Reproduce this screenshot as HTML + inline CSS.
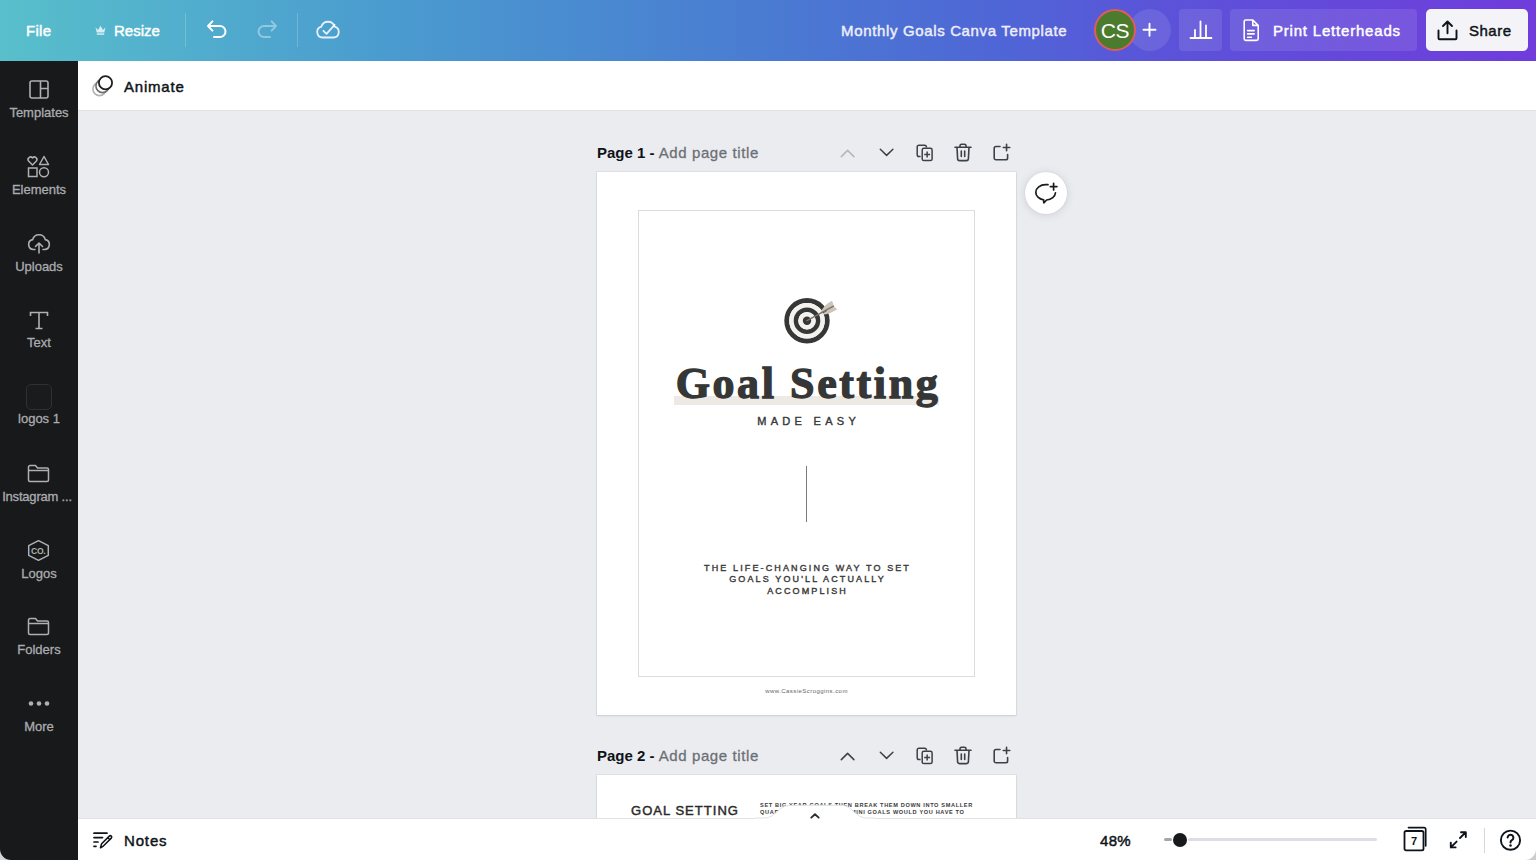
<!DOCTYPE html>
<html><head><meta charset="utf-8">
<style>
*{box-sizing:border-box;margin:0;padding:0}
html,body{width:1536px;height:860px;overflow:hidden;font-family:"Liberation Sans",sans-serif;background:#ebecf0;position:relative}
.a{position:absolute}
svg{position:absolute;overflow:visible}
#hdr{position:absolute;left:0;top:0;width:1536px;height:61px;background:linear-gradient(90deg,#58bfcb 0px,#4a9bcf 390px,#4a7bd2 770px,#4f66d6 1000px,#5b53d9 1160px,#703cdc 1536px)}
.ht{position:absolute;color:#fff;font-size:15px;-webkit-text-stroke:0.45px currentColor;white-space:nowrap;line-height:20px;margin-top:0.5px}
#side{position:absolute;left:0;top:61px;width:78px;height:799px;background:#18191b}
.sl{position:absolute;left:0;width:78px;text-align:center;color:#aaacaf;font-size:13px;white-space:nowrap;line-height:16px;-webkit-text-stroke:0.3px #aaacaf}
#tool{position:absolute;left:78px;top:61px;width:1458px;height:50px;background:#fff;border-bottom:1px solid #e0e1e5}
#bot{position:absolute;left:78px;top:818px;width:1458px;height:42px;background:#fff;border-top:1px solid #e0e1e5}
.pt{position:absolute;left:597px;font-size:15px;line-height:20px;color:#0e1318;white-space:nowrap}
.pt b{letter-spacing:0px}
.pt span{color:#6c7075;-webkit-text-stroke:0.3px #6c7075;letter-spacing:0.6px}
.page{position:absolute;left:597px;width:419px;background:#fff;box-shadow:0 0 0 1px rgba(64,87,109,.07),0 1px 2px rgba(53,71,90,.12)}
</style></head><body>
<div id="hdr">
  <div class="ht" style="left:26px;top:20px;letter-spacing:0.3px">File</div>
  <svg style="left:95px;top:25px" width="11" height="10" viewBox="0 0 11 10"><path d="M0.5 2.2 L3 5 L5.5 0.8 L8 5 L10.5 2.2 L9.3 7.5 L1.7 7.5 Z" fill="#d6edf1"/><rect x="1.8" y="8.3" width="7.4" height="1.5" fill="#d6edf1"/></svg>
  <div class="ht" style="left:114px;top:20px;letter-spacing:0px">Resize</div>
  <div class="a" style="left:185px;top:13px;width:1px;height:34px;background:rgba(255,255,255,.2)"></div>
  <svg style="left:205px;top:18px" width="24" height="22" viewBox="0 0 24 22"><path d="M7.4 3.4 L3 8 L7.4 12.6 M3 8 H15 a5.5 5.5 0 0 1 0 11 H9" fill="none" stroke="#fff" stroke-width="2" stroke-linecap="round" stroke-linejoin="round"/></svg>
  <svg style="left:255px;top:18px" width="24" height="22" viewBox="0 0 24 22"><path d="M16.6 3.4 L21 8 L16.6 12.6 M21 8 H9 a5.5 5.5 0 0 0 0 11 H15" fill="none" stroke="rgba(255,255,255,.38)" stroke-width="2" stroke-linecap="round" stroke-linejoin="round"/></svg>
  <div class="a" style="left:297px;top:13px;width:1px;height:34px;background:rgba(255,255,255,.2)"></div>
  <svg style="left:316px;top:19px" width="24" height="20" viewBox="0 0 24 20"><path d="M6.5 18.5 H17.5 a5.5 5.5 0 0 0 1.2 -10.8 a7 7 0 0 0 -13.4 0 a5.5 5.5 0 0 0 1.2 10.8 Z" fill="none" stroke="rgba(255,255,255,.85)" stroke-width="1.8" stroke-linejoin="round"/><path d="M7.4 11.8 L10.5 14.8 L18.6 5.8" fill="none" stroke="rgba(255,255,255,.85)" stroke-width="1.8" stroke-linecap="round" stroke-linejoin="round"/></svg>
  <div class="ht" style="left:841px;top:20px;color:#eeeefa;letter-spacing:0.65px">Monthly Goals Canva Template</div>
  <div class="a" style="left:1129px;top:9px;width:42px;height:42px;border-radius:50%;background:rgba(255,255,255,.1)"></div>
  <div class="a" style="left:1094px;top:9px;width:42px;height:42px;border-radius:50%;background:#4b7b2c;border:2px solid #e25b5b;color:#fff;font-size:21px;line-height:40px;text-align:center;letter-spacing:-0.3px">CS</div>
  <svg style="left:1143px;top:23px" width="14" height="14" viewBox="0 0 14 14"><path d="M6.5 0.7 V12.8 M0.5 6.7 H12.5" stroke="#fff" stroke-width="1.9" stroke-linecap="round"/></svg>
  <div class="a" style="left:1179px;top:9px;width:43px;height:42px;border-radius:4px;background:rgba(255,255,255,.1)"></div>
  <svg style="left:1189px;top:20px" width="24" height="20" viewBox="0 0 24 20"><path d="M1.5 18 H22.5 M6 18 V10 M11.5 18 V1.5 M17 18 V5.5" fill="none" stroke="#fff" stroke-width="1.8" stroke-linecap="round"/></svg>
  <div class="a" style="left:1230px;top:9px;width:187px;height:42px;border-radius:4px;background:rgba(255,255,255,.1)"></div>
  <svg style="left:1243px;top:19px" width="18" height="23" viewBox="0 0 18 23"><path d="M2.8 1 H9.8 L15.2 6.4 V19.8 a1.6 1.6 0 0 1 -1.6 1.6 H2.8 a1.6 1.6 0 0 1 -1.6 -1.6 V2.6 a1.6 1.6 0 0 1 1.6 -1.6 Z M9.8 1 V6.4 H15.2 M4.6 11.6 H11.2 M4.6 14.9 H11.2 M4.6 18.2 H8.4" fill="none" stroke="#fff" stroke-width="1.6" stroke-linejoin="round" stroke-linecap="round"/></svg>
  <div class="ht" style="left:1273px;top:20px;letter-spacing:0.8px">Print Letterheads</div>
  <div class="a" style="left:1426px;top:9px;width:102px;height:42px;border-radius:5px;background:#f4f3f8"></div>
  <svg style="left:1437px;top:20px" width="23" height="22" viewBox="0 0 23 22"><path d="M10.5 13.2 V1.8 M6 6 L10.5 1.5 L15 6 M1.5 10.5 V18.2 a1 1 0 0 0 1 1 H18.5 a1 1 0 0 0 1 -1 V10.5" fill="none" stroke="#0e1318" stroke-width="1.9" stroke-linecap="round" stroke-linejoin="round"/></svg>
  <div class="ht" style="left:1469px;top:20px;color:#0e1318;letter-spacing:0.5px">Share</div>
</div>
<div id="side">
  <svg style="left:29px;top:19px" width="20" height="19" viewBox="0 0 20 19"><rect x="1" y="1" width="18" height="17" rx="2" fill="none" stroke="#aeb0b3" stroke-width="1.6"/><path d="M11.5 1 V18 M11.5 8.5 H19" stroke="#aeb0b3" stroke-width="1.6"/></svg>
  <div class="sl" style="top:44px">Templates</div>
  <svg style="left:27px;top:94px" width="23" height="23" viewBox="0 0 23 23"><path d="M5.5 10 L1.6 6 a2.4 2.4 0 0 1 3.9 -3 a2.4 2.4 0 0 1 3.9 3 Z" fill="none" stroke="#aeb0b3" stroke-width="1.5" stroke-linejoin="round"/><path d="M17 1.5 L21.5 9.5 H12.5 Z" fill="none" stroke="#aeb0b3" stroke-width="1.5" stroke-linejoin="round"/><rect x="1.5" y="13" width="8.5" height="8.5" fill="none" stroke="#aeb0b3" stroke-width="1.5"/><circle cx="17" cy="17.2" r="4.5" fill="none" stroke="#aeb0b3" stroke-width="1.5"/></svg>
  <div class="sl" style="top:121px">Elements</div>
  <svg style="left:27px;top:173px" width="24" height="20" viewBox="0 0 24 20"><path d="M8 15.5 H6.5 a5 5 0 0 1 -0.8 -9.9 a6.5 6.5 0 0 1 12.6 0 a5 5 0 0 1 -0.8 9.9 H16" fill="none" stroke="#aeb0b3" stroke-width="1.6" stroke-linecap="round"/><path d="M12 19 V9 M8.5 12.5 L12 9 L15.5 12.5" fill="none" stroke="#aeb0b3" stroke-width="1.6" stroke-linecap="round" stroke-linejoin="round"/></svg>
  <div class="sl" style="top:198px">Uploads</div>
  <svg style="left:29px;top:250px" width="20" height="19" viewBox="0 0 20 19"><path d="M1.5 5 V1.5 H18.5 V5 M10 1.5 V17.5 M6.5 17.5 H13.5" fill="none" stroke="#aeb0b3" stroke-width="1.6"/></svg>
  <div class="sl" style="top:274px">Text</div>
  <div class="a" style="left:25.5px;top:323px;width:26px;height:26px;border-radius:5px;background:#1a1b1d;border:1px solid #2f3033"></div>
  <div class="sl" style="top:350px">logos 1</div>
  <svg style="left:27px;top:403px" width="23" height="19" viewBox="0 0 23 19"><path d="M1.5 3 a1.5 1.5 0 0 1 1.5 -1.5 H8.5 L10.5 4 H20 a1.5 1.5 0 0 1 1.5 1.5 V16 a1.5 1.5 0 0 1 -1.5 1.5 H3 a1.5 1.5 0 0 1 -1.5 -1.5 Z M1.5 6.5 H21.5" fill="none" stroke="#aeb0b3" stroke-width="1.5" stroke-linejoin="round"/></svg>
  <div class="sl" style="top:428px;left:-2px;letter-spacing:-0.2px">Instagram ...</div>
  <svg style="left:27px;top:478px" width="23" height="23" viewBox="0 0 23 23"><path d="M11.5 1.7 L21.3 6.7 V16.3 L11.5 21.3 L1.7 16.3 V6.7 Z" fill="none" stroke="#aeb0b3" stroke-width="1.5" stroke-linejoin="round"/><text x="11.2" y="14.8" text-anchor="middle" font-family="Liberation Sans" font-weight="bold" font-size="8.6" fill="#aeb0b3" letter-spacing="-0.3">CO.</text></svg>
  <div class="sl" style="top:505px">Logos</div>
  <svg style="left:27px;top:556px" width="23" height="19" viewBox="0 0 23 19"><path d="M1.5 3 a1.5 1.5 0 0 1 1.5 -1.5 H8.5 L10.5 4 H20 a1.5 1.5 0 0 1 1.5 1.5 V16 a1.5 1.5 0 0 1 -1.5 1.5 H3 a1.5 1.5 0 0 1 -1.5 -1.5 Z M1.5 6.5 H21.5" fill="none" stroke="#aeb0b3" stroke-width="1.5" stroke-linejoin="round"/></svg>
  <div class="sl" style="top:581px">Folders</div>
  <svg style="left:28px;top:639px" width="22" height="7" viewBox="0 0 22 7"><circle cx="3" cy="3.5" r="2.3" fill="#aeb0b3"/><circle cx="11" cy="3.5" r="2.3" fill="#aeb0b3"/><circle cx="19" cy="3.5" r="2.3" fill="#aeb0b3"/></svg>
  <div class="sl" style="top:658px">More</div>
</div>
<div id="tool">
  <svg style="left:12px;top:13px" width="24" height="24" viewBox="0 0 24 24"><circle cx="9.5" cy="15" r="6.6" fill="#fff" stroke="#b3b3b3" stroke-width="1.6"/><circle cx="12.5" cy="12" r="6.6" fill="#fff" stroke="#6e6e6e" stroke-width="1.6"/><circle cx="15.5" cy="8.8" r="6.6" fill="#fff" stroke="#1e1e1e" stroke-width="1.8"/></svg>
  <div class="a" style="left:46px;top:15.5px;font-size:15px;line-height:20px;-webkit-text-stroke:0.45px #0e1318;color:#0e1318;letter-spacing:0.8px">Animate</div>
</div>
<div class="pt" style="top:142.5px"><b>Page 1 -</b> <span>Add page title</span></div>
<svg style="left:840px;top:149px" width="15" height="9" viewBox="0 0 15 9"><path d="M1.3 7.6 L7.6 1.4 L13.9 7.6" fill="none" stroke="#b3b6ba" stroke-width="1.5" stroke-linecap="round" stroke-linejoin="round"/></svg>
<svg style="left:879px;top:148px" width="15" height="9" viewBox="0 0 15 9"><path d="M1.3 1.3 L7.6 7.4 L13.9 1.3" fill="none" stroke="#3d4146" stroke-width="1.5" stroke-linecap="round" stroke-linejoin="round"/></svg>
<svg style="left:915.5px;top:144px" width="19" height="18" viewBox="0 0 19 18"><path d="M4.6 12.6 H3 a1.8 1.8 0 0 1 -1.8 -1.8 V3 a1.8 1.8 0 0 1 1.8 -1.8 H8.6 a1.8 1.8 0 0 1 1.8 1.8 V3.6" fill="none" stroke="#3d4146" stroke-width="1.5"/><rect x="6.2" y="4.3" width="9.9" height="12.3" rx="1.7" fill="none" stroke="#3d4146" stroke-width="1.5"/><path d="M11.15 7.5 V13.4 M8.2 10.45 H14.1" stroke="#3d4146" stroke-width="1.5"/></svg>
<svg style="left:954px;top:143px" width="18" height="19" viewBox="0 0 18 19"><path d="M1 4.3 H17 M6 4.3 V2.8 a1.6 1.6 0 0 1 1.6 -1.6 H10.4 a1.6 1.6 0 0 1 1.6 1.6 V4.3 M3 4.3 L3.6 15.8 a2 2 0 0 0 2 1.8 H12.4 a2 2 0 0 0 2 -1.8 L15 4.3 M7.3 8 V13.5 M10.7 8 V13.5" fill="none" stroke="#3d4146" stroke-width="1.6" stroke-linecap="round" stroke-linejoin="round"/></svg>
<svg style="left:993px;top:142.5px" width="18" height="18" viewBox="0 0 18 18"><path d="M7 3.5 H3 a1.8 1.8 0 0 0 -1.8 1.8 V15 a1.8 1.8 0 0 0 1.8 1.8 H12.8 a1.8 1.8 0 0 0 1.8 -1.8 V11.5 M10.3 4.5 H16.8 M13.55 1.2 V7.8" fill="none" stroke="#3d4146" stroke-width="1.6" stroke-linecap="round"/></svg>
<div class="page" style="top:172px;height:543px">
  <div class="a" style="left:41px;top:38px;width:337px;height:467px;border:1px solid #dcdcdc"></div>
  <svg style="left:186px;top:124px" width="56" height="50" viewBox="0 0 56 50">
    <circle cx="24" cy="24.7" r="20.25" fill="none" stroke="#363737" stroke-width="4.9"/>
    <circle cx="24" cy="24.7" r="15.5" fill="none" stroke="#f4f2ee" stroke-width="4.6"/>
    <circle cx="24" cy="24.7" r="11" fill="none" stroke="#363737" stroke-width="4.6"/>
    <circle cx="24" cy="24.7" r="6.5" fill="none" stroke="#f4f2ee" stroke-width="4.6"/>
    <circle cx="24" cy="24.7" r="4.2" fill="#363737"/>
    <path d="M37 18 Q39.5 9.5 49 4.8 Q50.2 7 50.5 10 Z" fill="#cdc4ba"/>
    <path d="M39 18 L50.5 10.4 Q52.5 11.3 54.3 13.2 Q48 17.3 42 18.6 Z" fill="#cdc4ba"/>
    <path d="M24 24.7 L50.5 10.2" stroke="#7b7269" stroke-width="1.5" stroke-linecap="round"/>
  </svg>
  <div class="a" style="left:77px;top:224px;width:265px;height:9px;background:#ede9e4"></div>
  <div class="a" style="left:0;top:187px;width:419px;text-align:center;font-family:'Liberation Serif',serif;font-weight:bold;font-size:44px;line-height:50px;color:#353636;letter-spacing:2.6px;-webkit-text-stroke:1.3px #353636;padding-left:3px;white-space:nowrap">Goal Setting</div>
  <div class="a" style="left:0;top:242.2px;width:419px;text-align:center;font-size:11px;line-height:14px;color:#383838;letter-spacing:4.3px;-webkit-text-stroke:0.4px #383838;white-space:nowrap;padding-left:4.3px">MADE EASY</div>
  <div class="a" style="left:209px;top:294px;width:1px;height:56px;background:#7a7a7a"></div>
  <div class="a" style="left:0;top:390.7px;width:419px;text-align:center;font-size:9px;line-height:11.6px;color:#3a3a3a;letter-spacing:2.12px;-webkit-text-stroke:0.4px #3a3a3a;white-space:nowrap;padding-left:2.12px">THE LIFE-CHANGING WAY TO SET<br>GOALS YOU'LL ACTUALLY<br>ACCOMPLISH</div>
  <div class="a" style="left:0;top:515px;width:419px;text-align:center;font-size:6px;line-height:8px;color:#666;letter-spacing:0.45px;white-space:nowrap">www.CassieScroggins.com</div>
</div>
<div class="a" style="left:1025px;top:172px;width:42px;height:42px;border-radius:50%;background:#fff;box-shadow:0 0 0 1px rgba(64,87,109,.04),0 1px 8px rgba(53,71,90,.16)"></div>
<svg style="left:1034px;top:182px" width="25" height="23" viewBox="0 0 25 23"><path d="M14 2.7 H11.65 A9.85 7.7 0 0 0 1.8 10.3 A9.85 7.7 0 0 0 9.6 17.9 L9.8 20.8 L12.6 18 A9.85 7.7 0 0 0 21.5 10.8" fill="none" stroke="#1a1b1e" stroke-width="1.7" stroke-linecap="round" stroke-linejoin="round"/><path d="M19.6 1.4 V7.9 M16.35 4.6 H22.9" stroke="#1a1b1e" stroke-width="1.7" stroke-linecap="round"/></svg>
<div class="pt" style="top:745.5px"><b>Page 2 -</b> <span>Add page title</span></div>
<svg style="left:840px;top:752px" width="15" height="9" viewBox="0 0 15 9"><path d="M1.3 7.6 L7.6 1.4 L13.9 7.6" fill="none" stroke="#3d4146" stroke-width="1.5" stroke-linecap="round" stroke-linejoin="round"/></svg>
<svg style="left:879px;top:751px" width="15" height="9" viewBox="0 0 15 9"><path d="M1.3 1.3 L7.6 7.4 L13.9 1.3" fill="none" stroke="#3d4146" stroke-width="1.5" stroke-linecap="round" stroke-linejoin="round"/></svg>
<svg style="left:915.5px;top:747px" width="19" height="18" viewBox="0 0 19 18"><path d="M4.6 12.6 H3 a1.8 1.8 0 0 1 -1.8 -1.8 V3 a1.8 1.8 0 0 1 1.8 -1.8 H8.6 a1.8 1.8 0 0 1 1.8 1.8 V3.6" fill="none" stroke="#3d4146" stroke-width="1.5"/><rect x="6.2" y="4.3" width="9.9" height="12.3" rx="1.7" fill="none" stroke="#3d4146" stroke-width="1.5"/><path d="M11.15 7.5 V13.4 M8.2 10.45 H14.1" stroke="#3d4146" stroke-width="1.5"/></svg>
<svg style="left:954px;top:746px" width="18" height="19" viewBox="0 0 18 19"><path d="M1 4.3 H17 M6 4.3 V2.8 a1.6 1.6 0 0 1 1.6 -1.6 H10.4 a1.6 1.6 0 0 1 1.6 1.6 V4.3 M3 4.3 L3.6 15.8 a2 2 0 0 0 2 1.8 H12.4 a2 2 0 0 0 2 -1.8 L15 4.3 M7.3 8 V13.5 M10.7 8 V13.5" fill="none" stroke="#3d4146" stroke-width="1.6" stroke-linecap="round" stroke-linejoin="round"/></svg>
<svg style="left:993px;top:745.5px" width="18" height="18" viewBox="0 0 18 18"><path d="M7 3.5 H3 a1.8 1.8 0 0 0 -1.8 1.8 V15 a1.8 1.8 0 0 0 1.8 1.8 H12.8 a1.8 1.8 0 0 0 1.8 -1.8 V11.5 M10.3 4.5 H16.8 M13.55 1.2 V7.8" fill="none" stroke="#3d4146" stroke-width="1.6" stroke-linecap="round"/></svg>
<div class="page" style="top:775px;height:100px">
  <div class="a" style="left:34px;top:28.5px;font-size:13px;line-height:14px;color:#2a2a2a;letter-spacing:1.03px;-webkit-text-stroke:0.45px #2a2a2a;white-space:nowrap">GOAL SETTING</div>
  <div class="a" style="left:163px;top:27px;font-size:5.6px;line-height:7.2px;color:#3a3a3a;letter-spacing:0.65px;font-weight:bold;white-space:nowrap">SET BIG YEAR GOALS THEN BREAK THEM DOWN INTO SMALLER<br>QUARTERLY GOALS. WHAT MINI GOALS WOULD YOU HAVE TO</div>
</div>
<div id="bot">
  <svg style="left:15px;top:13px" width="20" height="17" viewBox="0 0 20 17"><path d="M1 1.2 H14 M1 5.6 H9.5 M1 10 H5 M1 14.3 H3" stroke="#0e1318" stroke-width="1.7" stroke-linecap="round"/><path d="M7.5 15.8 L8.6 11.8 L16.3 4.1 a1.4 1.4 0 0 1 2 2 L10.6 13.8 Z M14.8 5.6 L16.8 7.6" fill="none" stroke="#0e1318" stroke-width="1.5" stroke-linejoin="round"/></svg>
  <div class="a" style="left:46px;top:11.5px;font-size:15px;line-height:20px;-webkit-text-stroke:0.45px #0e1318;color:#0e1318;letter-spacing:0.85px">Notes</div>
  <div class="a" style="left:1022px;top:11.5px;font-size:15px;line-height:20px;-webkit-text-stroke:0.45px #0e1318;color:#0e1318;letter-spacing:0.3px">48%</div>
  <div class="a" style="left:1086px;top:19px;width:8px;height:3px;border-radius:2px;background:#a3a6ab"></div>
  <div class="a" style="left:1110px;top:19px;width:189px;height:3px;border-radius:2px;background:#dcdee3"></div>
  <div class="a" style="left:1095px;top:14px;width:14px;height:14px;border-radius:50%;background:#18191b"></div>
  <svg style="left:1325px;top:7px" width="26" height="26" viewBox="0 0 26 26"><path d="M5.5 1.6 H21.2 a1.5 1.5 0 0 1 1.5 1.5 V19.8" fill="none" stroke="#0e1318" stroke-width="1.7" stroke-linecap="round"/><rect x="1.5" y="5" width="19" height="19.3" rx="1.6" fill="#fff" stroke="#0e1318" stroke-width="1.8"/><text x="11" y="18.6" text-anchor="middle" font-family="Liberation Sans" font-weight="bold" font-size="11" fill="#0e1318">7</text></svg>
  <svg style="left:1371px;top:12px" width="19" height="19" viewBox="0 0 19 19"><path d="M11 7 L16.8 1.2 M12 1.2 H16.8 V6 M7.6 10.6 L1.8 16.4 M1.8 11.6 V16.4 H6.6" fill="none" stroke="#0e1318" stroke-width="1.9" stroke-linecap="round" stroke-linejoin="round"/></svg>
  <div class="a" style="left:1406px;top:9px;width:1px;height:25px;background:#d5d7db"></div>
  <svg style="left:1421px;top:10px" width="24" height="24" viewBox="0 0 24 24"><circle cx="11.5" cy="11.2" r="9.6" fill="none" stroke="#0e1318" stroke-width="1.9"/><path d="M8.6 8.6 a2.9 2.9 0 1 1 4.3 2.6 c-0.9 0.5 -1.4 1 -1.4 2 V13.6" fill="none" stroke="#0e1318" stroke-width="2" stroke-linecap="round"/><circle cx="11.5" cy="16.4" r="1.25" fill="#0e1318"/></svg>
</div>
<svg style="left:755px;top:803px;z-index:5" width="120" height="17" viewBox="0 0 120 17"><path d="M0 15 H10 C20 15 24 2.4 34 2.4 H87 C97 2.4 101 15 111 15 H120 V17 H0 Z" fill="#fff"/><path d="M0 15 H10 C20 15 24 2.4 34 2.4 H87 C97 2.4 101 15 111 15 H120" fill="none" stroke="#e1e2e6" stroke-width="1"/><path d="M56.3 14.6 L60 11.2 L63.7 14.6" fill="none" stroke="#2b2d30" stroke-width="1.9" stroke-linecap="round" stroke-linejoin="round"/></svg>
<svg style="left:0;top:849px;z-index:6" width="12" height="11" viewBox="0 0 12 11"><path d="M0 0 V11 H11 A11 11 0 0 1 0 0 Z" fill="#d6d6d6"/></svg>
<svg style="left:1524px;top:849px;z-index:6" width="12" height="11" viewBox="0 0 12 11"><path d="M12 0 V11 H1 A11 11 0 0 0 12 0 Z" fill="#cdcdcd"/></svg>
</body></html>
